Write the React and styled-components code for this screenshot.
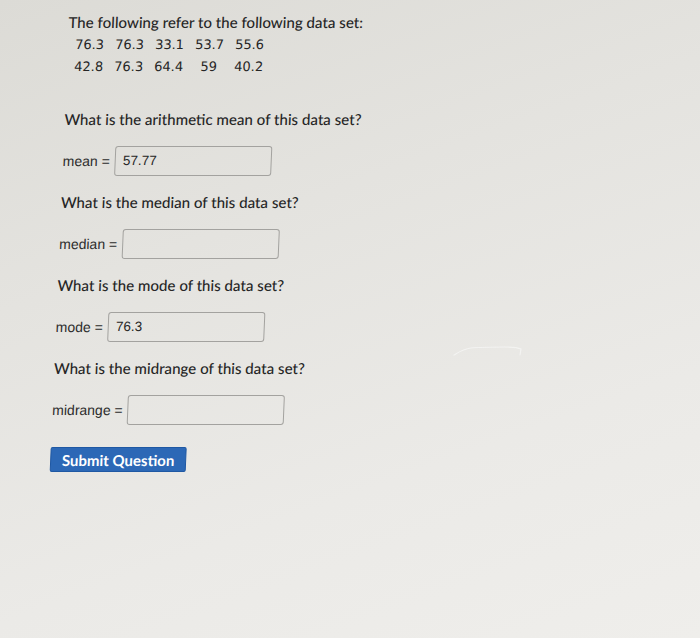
import React from 'react'
import styled, { createGlobalStyle } from 'styled-components';

const GlobalStyle = createGlobalStyle`
  html, body {
    margin: 0;
    padding: 0;
  }
  body {
    width: 700px;
    height: 638px;
    overflow: hidden;
    background: linear-gradient(160deg, #dcdbd6 0%, #e4e3df 35%, #ebeae7 70%, #efeeeb 100%);
    color: #262626;
    font-family: Lato, "Open Sans", sans-serif;
  }
`;

const data = [
    ["76.3", "76.3", "33.1", "53.7", "55.6"],
    ["42.8", "76.3", "64.4", "59", "40.2"],
];

const questions = [
    { prompt: "What is the arithmetic mean of this data set?", label: "mean", value: "57.77" },
    { prompt: "What is the median of this data set?", label: "median", value: "" },
    { prompt: "What is the mode of this data set?", label: "mode", value: "76.3" },
    { prompt: "What is the midrange of this data set?", label: "midrange", value: "" },
];

export default function App() {
    return (
        <>
            <GlobalStyle />
            <Page>
                <Sheet>
                    <Title>The following refer to the following data set:</Title>
                    <DataTable>
                        <tbody>
                            {data.map((row, i) => (
                                <tr key={i}>
                                    {row.map((n, j) => <td key={j}>{n}</td>)}
                                </tr>
                            ))}
                        </tbody>
                    </DataTable>
                    <Questions>
                        {questions.map((q) => (
                            <React.Fragment key={q.label}>
                                <Prompt>{q.prompt}</Prompt>
                                <AnswerRow>
                                    <Label htmlFor={q.label}>{q.label} =</Label>
                                    <AnswerBox id={q.label} defaultValue={q.value} />
                                </AnswerRow>
                            </React.Fragment>
                        ))}
                        <SubmitButton type="button">Submit Question</SubmitButton>
                    </Questions>
                </Sheet>
                <Squiggle width="80" height="20" viewBox="0 0 80 20">
                    <path d="M1 12 C 6 9, 10 6, 18 5 S 40 4, 52 4 S 66 5, 68 6 L 67 12" fill="none" stroke="#f5f5f3" strokeWidth="1.2" strokeLinecap="round" opacity="0.85" />
                </Squiggle>
            </Page>
        </>
    )
}

const Page = styled.div`
  position: relative;
  width: 700px;
  height: 638px;
  padding-top: 11px;
  box-sizing: border-box;
`

const Sheet = styled.div`
  margin-left: 69px;
  transform: skewX(-2.4deg);
  transform-origin: 0 0;
`

const Title = styled.div`
  font-size: 15.1px;
  line-height: 22px;
  font-weight: 500;
`

const DataTable = styled.table`
  border-collapse: collapse;
  margin-left: 2px;
  font-family: "DejaVu Sans", Verdana, sans-serif;
  font-size: 13px;
  color: #262626;

  td {
    width: 40px;
    height: 22px;
    padding: 0;
    text-align: center;
  }
`

const Questions = styled.div`
  display: flex;
  flex-direction: column;
  align-items: flex-start;
  gap: 15.5px;
  margin-top: 31px;
`

const Prompt = styled.div`
  font-size: 15.1px;
  line-height: 22px;
  font-weight: 500;
`

const AnswerRow = styled.div`
  display: flex;
  align-items: center;
  gap: 5px;
  height: 30px;
`

const Label = styled.label`
  font-family: "Liberation Sans", Arial, sans-serif;
  font-size: 14px;
  color: #2c2c2c;
`

const AnswerBox = styled.input`
  width: 157px;
  height: 30px;
  box-sizing: border-box;
  border: 1px solid #a3a29f;
  border-radius: 3px;
  background: transparent;
  padding: 0 7px;
  font-family: "Liberation Sans", Arial, sans-serif;
  font-size: 13.5px;
  color: #262626;
  outline: none;
`

const SubmitButton = styled.button`
  margin-top: 7px;
  width: 136px;
  height: 25px;
  border: 1px solid #1f58a3;
  border-radius: 2px;
  background: #2c68b6;
  color: #ffffff;
  font-family: Lato, "Open Sans", sans-serif;
  font-size: 15px;
  font-weight: 700;
  padding: 0;
`

const Squiggle = styled.svg`
  position: absolute;
  left: 453px;
  top: 343px;
`
